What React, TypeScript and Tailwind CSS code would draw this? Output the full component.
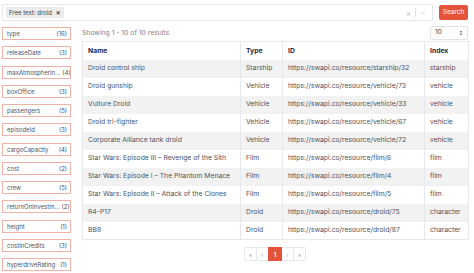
import React from "react";

const facets: [string, number][] = [
  ["type", 16],
  ["releaseDate", 3],
  ["maxAtmospherin...", 4],
  ["boxOffice", 3],
  ["passengers", 5],
  ["episodeId", 3],
  ["cargoCapacity", 4],
  ["cost", 2],
  ["crew", 5],
  ["returnOnInvestm...", 2],
  ["height", 1],
  ["costInCredits", 3],
  ["hyperdriveRating", 1],
];

const rows: [string, string, string, string][] = [
  ["Droid control ship", "Starship", "https://swapi.co/resource/starship/32", "starship"],
  ["Droid gunship", "Vehicle", "https://swapi.co/resource/vehicle/73", "vehicle"],
  ["Vulture Droid", "Vehicle", "https://swapi.co/resource/vehicle/33", "vehicle"],
  ["Droid tri-fighter", "Vehicle", "https://swapi.co/resource/vehicle/67", "vehicle"],
  ["Corporate Alliance tank droid", "Vehicle", "https://swapi.co/resource/vehicle/72", "vehicle"],
  ["Star Wars: Episode III – Revenge of the Sith", "Film", "https://swapi.co/resource/film/6", "film"],
  ["Star Wars: Episode I – The Phantom Menace", "Film", "https://swapi.co/resource/film/4", "film"],
  ["Star Wars: Episode II – Attack of the Clones", "Film", "https://swapi.co/resource/film/5", "film"],
  ["R4-P17", "Droid", "https://swapi.co/resource/droid/75", "character"],
  ["BB8", "Droid", "https://swapi.co/resource/droid/87", "character"],
];

export default function App() {
  return (
    <div
      className="w-[474px] h-[273px] bg-white overflow-hidden text-[7px] text-[#4d5462]"
      style={{ fontFamily: "Inter, 'Liberation Sans', sans-serif" }}
    >
      {/* Search bar */}
      <div className="flex items-center h-[24px] pl-[2px] pr-[6px] pt-[1px]">
        <div className="flex items-center h-[17px] w-[433px] border border-[#e4e7eb] rounded-[2px] pl-[3px] pr-[4px]">
          <div className="flex items-center h-[11px] px-[3px] bg-[#ececec] rounded-[1px] text-[6px] text-[#3c4454]">
            <span>Free text: droid</span>
            <span className="ml-[4px] text-[7px] leading-none font-bold">×</span>
          </div>
          <div className="flex-1" />
          <span className="text-[#b8bcc4] text-[8px] leading-none">×</span>
          <span className="w-px h-[9px] bg-[#dcdfe4] mx-[4px]" />
          <svg width="6" height="6" viewBox="0 0 10 10" className="mr-[2px]">
            <path d="M2 3.5 L5 6.5 L8 3.5" fill="none" stroke="#b8bcc4" strokeWidth="1.2" />
          </svg>
        </div>
        <div className="ml-[6px] w-[29px] h-[15px] bg-[#e5533a] rounded-[2px] text-white flex items-center justify-center text-[6.5px]">
          Search
        </div>
      </div>

      <div className="flex">
        {/* Facets */}
        <div className="w-[80px] pl-[2px] pt-[3px] flex flex-col gap-[6.25px]">
          {facets.map(([name, n]) => (
            <div
              key={name}
              className="w-[69px] h-[13px] border border-[#eeb3a6] flex items-center justify-between pl-[4px] pr-[3px] text-[6px] text-[#4a5468] whitespace-nowrap"
            >
              <span>{name}</span>
              <span className="ml-[2px]">({n})</span>
            </div>
          ))}
        </div>

        {/* Main */}
        <div className="w-[386px] ml-[2px]">
          <div className="flex items-center justify-between h-[17px] pt-[1px]">
            <span className="text-[#7b8494] text-[6.8px]">Showing 1 - 10 of 10 results</span>
            <div className="w-[38px] h-[14px] border border-[#dfe2e6] rounded-[2px] flex items-center justify-between px-[4px] text-[6.5px] text-[#333]">
              <span>10</span>
              <svg width="4" height="6" viewBox="0 0 4 6">
                <path d="M0.5 2.3 L2 0.8 L3.5 2.3 Z M0.5 3.7 L2 5.2 L3.5 3.7 Z" fill="#555" />
              </svg>
            </div>
          </div>
          <table className="w-[386px] border-collapse border border-[#e6e8ec] table-fixed">
            <colgroup>
              <col className="w-[158px]" />
              <col className="w-[42px]" />
              <col className="w-[142px]" />
              <col className="w-[44px]" />
            </colgroup>
            <thead>
              <tr className="h-[18px] bg-white">
                {["Name", "Type", "ID", "Index"].map((h) => (
                  <th
                    key={h}
                    className="text-left text-[#1e2b45] border-r border-[#e6e8ec] pl-[5px] text-[6.8px] font-bold"
                  >
                    {h}
                  </th>
                ))}
              </tr>
            </thead>
            <tbody>
              {rows.map((r, i) => (
                <tr key={i} className={`h-[18px] ${i % 2 === 0 ? "bg-[#f2f2f2]" : "bg-white"}`}>
                  {r.map((c, j) => (
                    <td
                      key={j}
                      className="pl-[5px] border-r border-[#e6e8ec] whitespace-nowrap overflow-hidden text-[6.8px]"
                    >
                      {c}
                    </td>
                  ))}
                </tr>
              ))}
            </tbody>
          </table>
          <div className="flex justify-center mt-[7px]">
            <div className="flex h-[14px] text-[6px] text-[#a0a6b0]">
              <div className="w-[13px] border border-[#e6e8ec] flex items-center justify-center rounded-l-[2px]">«</div>
              <div className="w-[11px] border-y border-[#e6e8ec] flex items-center justify-center">‹</div>
              <div className="w-[14px] bg-[#e5533a] text-white font-bold flex items-center justify-center">1</div>
              <div className="w-[11px] border-y border-[#e6e8ec] flex items-center justify-center">›</div>
              <div className="w-[13px] border border-[#e6e8ec] flex items-center justify-center rounded-r-[2px]">»</div>
            </div>
          </div>
        </div>
      </div>
    </div>
  );
}
